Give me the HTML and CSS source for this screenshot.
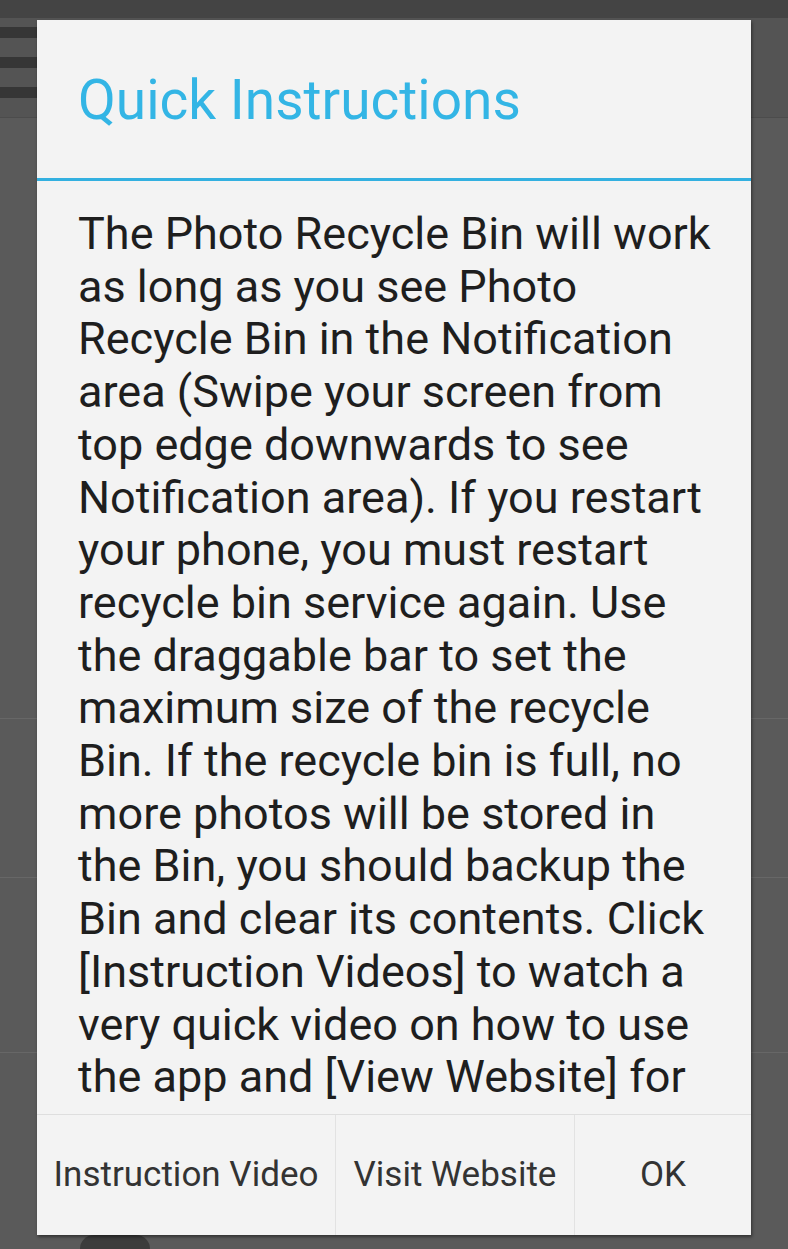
FILE: index.html
```html
<!DOCTYPE html>
<html>
<head>
<meta charset="utf-8">
<link rel="stylesheet" href="styles.css">
</head>
<body>
<div class="screen">
  <div class="statusbar"></div>
  <div class="actionbar">
    <div class="menu">
      <span class="bar"></span>
      <span class="bar"></span>
      <span class="bar"></span>
    </div>
  </div>
  <div class="list">
    <div class="row row-a"></div>
    <div class="row row-b"></div>
    <div class="row row-c"></div>
    <div class="row row-d"><span class="blob"></span></div>
  </div>
</div>

<div class="dialog">
  <div class="dialog-title">Quick Instructions</div>
  <div class="dialog-divider"></div>
  <div class="dialog-body">The Photo Recycle Bin will work as long as you see Photo Recycle Bin in the Notification area (Swipe your screen from top edge downwards to see Notification area). If you restart your phone, you must restart recycle bin service again. Use the draggable bar to set the maximum size of the recycle Bin. If the recycle bin is full, no more photos will be stored in the Bin, you should backup the Bin and clear its contents. Click [Instruction Videos] to watch a very quick video on how to use the app and [View Website] for</div>
  <div class="dialog-buttons">
    <div class="btn btn-video">Instruction Video</div>
    <div class="btn btn-site">Visit Website</div>
    <div class="btn btn-ok">OK</div>
  </div>
</div>
</body>
</html>
```

FILE: styles.css
```css
html, body {
  margin: 0;
  padding: 0;
}

body {
  width: 788px;
  height: 1249px;
  overflow: hidden;
  background: #5a5a5a;
  font-family: Roboto, "Noto Sans", "Liberation Sans", sans-serif;
  position: relative;
}

.screen {
  display: flex;
  flex-direction: column;
  height: 1249px;
}

.statusbar {
  height: 18px;
  background: #444444;
}

.actionbar {
  height: 100px;
  background: #545454;
  border-bottom: 1px solid #4c4c4c;
  box-sizing: border-box;
}

.menu {
  display: flex;
  flex-direction: column;
  gap: 19px;
  padding-top: 9px;
}

.bar {
  display: block;
  width: 60px;
  height: 11px;
  background: #363636;
}

.list {
  flex: 1;
  display: flex;
  flex-direction: column;
}

.row {
  border-bottom: 1px solid #676767;
  box-sizing: border-box;
}

.row-a { height: 601px; }
.row-b { height: 159px; }
.row-c { height: 175px; }
.row-d {
  flex: 1;
  border-bottom: none;
  display: flex;
  align-items: flex-end;
  padding-left: 80px;
}

.blob {
  display: block;
  width: 70px;
  height: 14px;
  background: #3c3c3c;
  border-radius: 40px 40px 0 0;
}

/* Dialog overlays the screen */
.dialog {
  position: absolute;
  left: 37px;
  top: 20px;
  width: 714px;
  height: 1215px;
  background: #f3f3f3;
  box-shadow: 1px 2px 3px rgba(0, 0, 0, 0.45);
  display: flex;
  flex-direction: column;
}

.dialog-title {
  padding: 47px 41px 45px 41px;
  height: 66px;
  line-height: 66px;
  font-size: 55px;
  color: #33b5e5;
  white-space: nowrap;
}

.dialog-divider {
  height: 3px;
  background: #33b0e0;
}

.dialog-body {
  flex: 1;
  overflow: hidden;
  padding: 27px 35px 0 41px;
  font-size: 45px;
  line-height: 52.7px;
  color: #1e1e1e;
  min-height: 0;
}

.dialog-buttons {
  height: 120px;
  border-top: 1px solid #dedede;
  display: flex;
}

.btn {
  display: flex;
  align-items: center;
  justify-content: center;
  font-size: 35px;
  color: #333333;
  white-space: nowrap;
  padding-bottom: 2px;
}

.btn-video { width: 298px; }
.btn-site {
  width: 238px;
  border-left: 1px solid #e2e2e2;
}
.btn-ok {
  flex: 1;
  border-left: 1px solid #e2e2e2;
}
```
